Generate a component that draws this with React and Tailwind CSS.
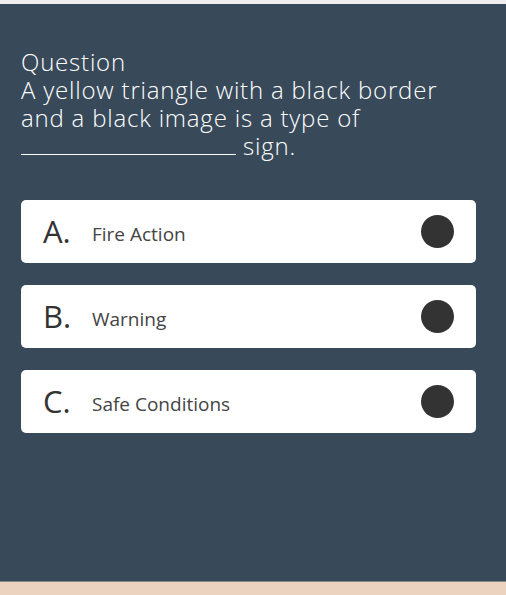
import React from 'react';

const options = [
  { letter: 'A.', text: 'Fire Action' },
  { letter: 'B.', text: 'Warning' },
  { letter: 'C.', text: 'Safe Conditions' },
];

const App = () => {
  return (
    <div className="w-[506px] h-[595px] flex flex-col bg-[#384a5a] font-['Open_Sans',sans-serif] overflow-hidden">
      <div className="h-[4px] bg-[#efefef]" />
      <div className="flex-1 pl-[21px] pr-[30px]">
        {/* Question */}
        <div className="pt-[44px] text-white text-[24px] leading-[28px] font-light tracking-[0.8px]">
          <p>Question</p>
          <p>A yellow triangle with a black border</p>
          <p>and a black image is a type of</p>
          <p>
            <span className="inline-block w-[215px] border-b border-white align-baseline" /> sign.
          </p>
        </div>

        {/* Options */}
        <div className="mt-[40px] flex flex-col gap-[22px]">
          {options.map((opt) => (
            <div
              key={opt.letter}
              className="h-[63px] bg-white rounded-[5px] flex items-center pl-[22px] pr-[22px] text-[#333333]"
            >
              <span className="w-[49px] text-[31px] font-medium leading-none">{opt.letter}</span>
              <span className="flex-1 text-[19px] pt-[6px] text-[#444444]">{opt.text}</span>
              <span className="w-[33px] h-[33px] rounded-full bg-[#333333]" />
            </div>
          ))}
        </div>
      </div>
      <div className="h-[1px] bg-[#8a8a8a]" />
      <div className="h-[13px] bg-[#ecd3bf]" />
    </div>
  );
};

export default App;
